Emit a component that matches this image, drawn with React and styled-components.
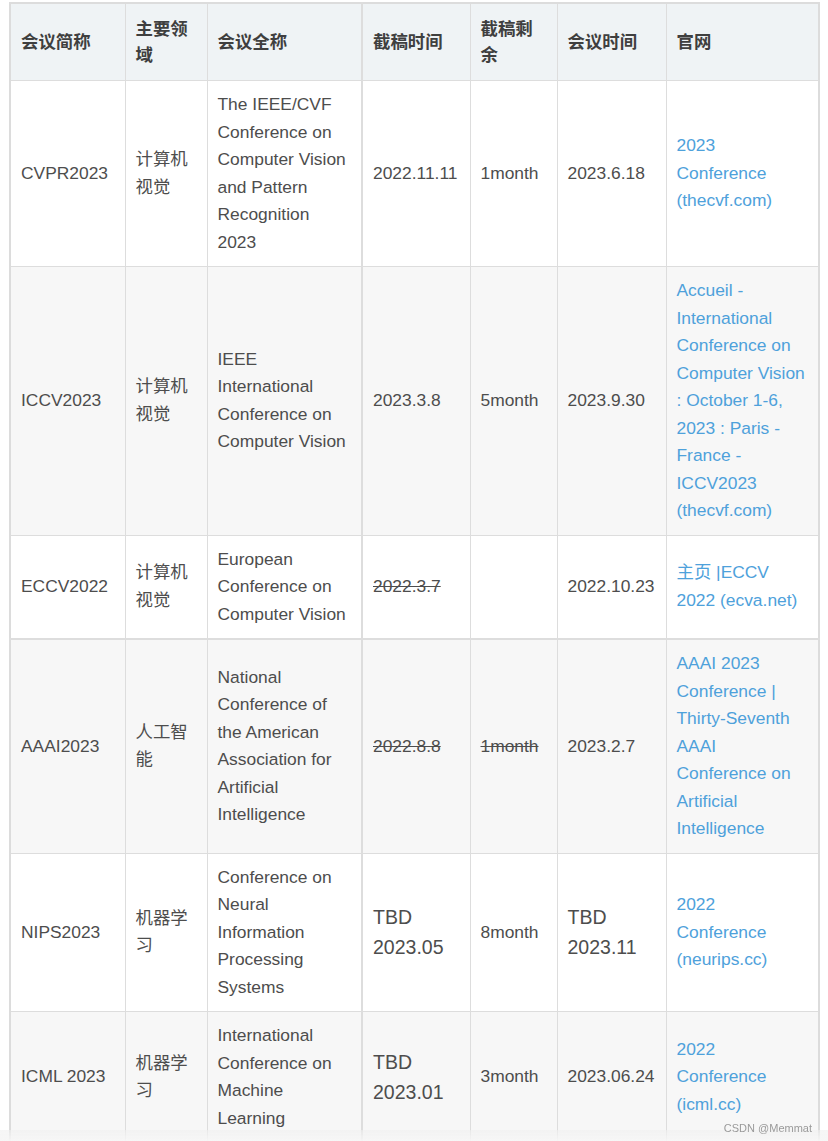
import React from "react";
import styled, { createGlobalStyle, css } from "styled-components";

const Global = createGlobalStyle`
  html, body { margin: 0; padding: 0; background: #fff; }
  body {
    font-family: "Liberation Sans", "Noto Sans CJK SC", sans-serif;
    color: #4d4d4d;
    overflow: hidden;
  }
`;

const Page = styled.div`
  padding: 2px 8px 0 9px;
`;

const Table = styled.table`
  table-layout: fixed;
  width: 809px;
  border-collapse: collapse;
  border: 2px solid #dcdcdc;
  font-size: 17.4px;
`;

const HeadCell = styled.th`
  background: #eff3f5;
  border: 1px solid #dddddd;
  border-left-width: ${(p) => (p.$thick ? "2px" : "1px")};
  padding: 12px 10px;
  line-height: 26px;
  font-weight: 700;
  text-align: left;
  vertical-align: middle;
  color: #3f3f3f;
`;

const Row = styled.tr`
  background: ${(p) => (p.$alt ? "#f7f7f7" : "#ffffff")};
  ${(p) =>
    p.$thickTop &&
    css`
      & > td {
        border-top-width: 2px;
      }
    `}
`;

const Cell = styled.td`
  border: 1px solid #dddddd;
  border-left-width: ${(p) => (p.$thick ? "2px" : "1px")};
  padding: 10px 10px;
  line-height: ${(p) => (p.$big ? "30px" : "27.5px")};
  font-size: ${(p) => (p.$big ? "19.5px" : "17.4px")};
  vertical-align: middle;
  word-wrap: break-word;
  text-decoration: ${(p) => (p.$strike ? "line-through" : "none")};
`;

const Link = styled.a`
  color: #4ea1db;
  text-decoration: none;
`;

const Fade = styled.div`
  position: fixed;
  left: 0;
  right: 0;
  bottom: 0;
  height: 11px;
  background: linear-gradient(
    to bottom,
    rgba(238, 238, 238, 0.55),
    rgba(246, 246, 246, 0.95)
  );
`;

const Watermark = styled.div`
  position: fixed;
  right: 16px;
  bottom: 7px;
  font-size: 11px;
  color: #9a9a9a;
  font-family: "Liberation Sans", sans-serif;
`;

const cols = [115, 82, 155, 108, 87, 109, 153];
const heads = ["会议简称", "主要领域", "会议全称", "截稿时间", "截稿剩余", "会议时间", "官网"];

const rows = [
  {
    name: "CVPR2023",
    field: "计算机视觉",
    full: "The IEEE/CVF Conference on Computer Vision and Pattern Recognition 2023",
    ddl: "2022.11.11",
    left: "1month",
    date: "2023.6.18",
    link: "2023 Conference (thecvf.com)",
  },
  {
    name: "ICCV2023",
    field: "计算机视觉",
    full: "IEEE International Conference on Computer Vision",
    ddl: "2023.3.8",
    left: "5month",
    date: "2023.9.30",
    link: "Accueil - International Conference on Computer Vision : October 1-6, 2023 : Paris - France - ICCV2023 (thecvf.com)",
  },
  {
    name: "ECCV2022",
    field: "计算机视觉",
    full: "European Conference on Computer Vision",
    ddl: "2022.3.7",
    ddlStrike: true,
    left: "",
    date: "2022.10.23",
    link: "主页 |ECCV 2022 (ecva.net)",
  },
  {
    name: "AAAI2023",
    field: "人工智能",
    full: "National Conference of the American Association for Artificial Intelligence",
    ddl: "2022.8.8",
    ddlStrike: true,
    left: "1month",
    leftStrike: true,
    date: "2023.2.7",
    link: "AAAI 2023 Conference | Thirty-Seventh AAAI Conference on Artificial Intelligence",
    thickTop: true,
  },
  {
    name: "NIPS2023",
    field: "机器学习",
    full: "Conference on Neural Information Processing Systems",
    ddl: "TBD 2023.05",
    ddlBig: true,
    left: "8month",
    date: "TBD 2023.11",
    dateBig: true,
    link: "2022 Conference (neurips.cc)",
  },
  {
    name: "ICML 2023",
    field: "机器学习",
    full: "International Conference on Machine Learning",
    ddl: "TBD 2023.01",
    ddlBig: true,
    left: "3month",
    date: "2023.06.24",
    link: "2022 Conference (icml.cc)",
  },
];

export default function App() {
  return (
    <Page>
      <Global />
      <Table>
        <colgroup>
          {cols.map((w, i) => (
            <col key={i} style={{ width: w }} />
          ))}
        </colgroup>
        <thead>
          <tr>
            {heads.map((h, i) => (
              <HeadCell key={h} $thick={i === 3}>
                {h}
              </HeadCell>
            ))}
          </tr>
        </thead>
        <tbody>
          {rows.map((r, i) => (
            <Row key={r.name} $alt={i % 2 === 1} $thickTop={r.thickTop}>
              <Cell>{r.name}</Cell>
              <Cell>{r.field}</Cell>
              <Cell>{r.full}</Cell>
              <Cell $thick $strike={r.ddlStrike} $big={r.ddlBig}>
                {r.ddl}
              </Cell>
              <Cell $strike={r.leftStrike}>{r.left}</Cell>
              <Cell $big={r.dateBig}>{r.date}</Cell>
              <Cell>
                <Link href="#">{r.link}</Link>
              </Cell>
            </Row>
          ))}
        </tbody>
      </Table>
      <Fade />
      <Watermark>CSDN @Memmat</Watermark>
    </Page>
  );
}
